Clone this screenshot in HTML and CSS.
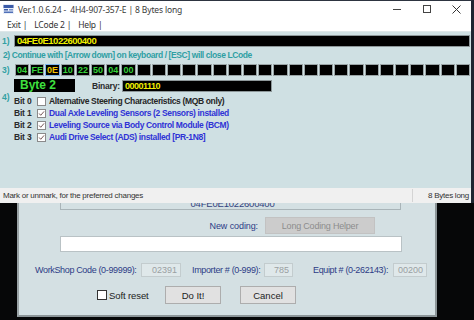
FILE: index.html
```html
<!DOCTYPE html>
<html>
<head>
<meta charset="utf-8">
<link rel="stylesheet" href="styles.css">
</head>
<body>
<div class="desktop">
  <div class="win back">
    <div class="codebox"><span>04FE0E1022600400</span></div>
    <div class="newrow">
      <span class="lbl">New coding:</span>
      <button class="btn disabled">Long Coding Helper</button>
    </div>
    <div class="newinput"></div>
    <div class="wsrow">
      <span class="lbl w1">WorkShop Code (0-99999):</span>
      <span class="field f1">02391</span>
      <span class="lbl w2">Importer # (0-999):</span>
      <span class="field f2">785</span>
      <span class="lbl w3">Equipt # (0-262143):</span>
      <span class="field f3">00200</span>
    </div>
    <div class="actrow">
      <label class="soft"><span class="cb"></span>Soft reset</label>
      <button class="btn act">Do It!</button>
      <button class="btn act">Cancel</button>
    </div>
  </div>

  <div class="win front">
    <div class="titlebar">
      <svg class="appicon" width="11" height="10" viewBox="0 0 11 10">
        <rect x="0" y="0" width="11" height="10" fill="#e8eef8"/>
        <rect x="0.5" y="1" width="10" height="3" fill="#3a5aa8"/>
        <rect x="1" y="5" width="4" height="1.5" fill="#3a5aa8"/>
        <rect x="6" y="5" width="4" height="1.5" fill="#7890c8"/>
        <rect x="1" y="7.5" width="9" height="1.5" fill="#5070b8"/>
      </svg>
      <span class="title">Ver.1.0.6.24 - &nbsp;4H4-907-357-E | 8 Bytes long</span>
      <div class="controls">
        <span class="ctl min"></span>
        <span class="ctl max"></span>
        <svg class="ctl close" width="9" height="9" viewBox="0 0 9 9"><path d="M0.5 0.5 L8.5 8.5 M8.5 0.5 L0.5 8.5" stroke="#333" stroke-width="1"/></svg>
      </div>
    </div>
    <div class="menubar">
      <span>Exit |</span><span>LCode 2 |</span><span>Help |</span>
    </div>
    <div class="content">
      <div class="row r1">
        <span class="num">1)</span>
        <div class="blackfield long">04FE0E1022600400</div>
      </div>
      <div class="row r2">2) Continue with [Arrow down] on keyboard / [ESC] will close LCode</div>
      <div class="row r3">
        <span class="num">3)</span>
        <div class="cells">
          <span class="cell">04</span><span class="cell">FE</span><span class="cell sel">0E</span><span class="cell">10</span><span class="cell">22</span><span class="cell">50</span><span class="cell">04</span><span class="cell">00</span>
          <span class="cell"></span><span class="cell"></span><span class="cell"></span><span class="cell"></span><span class="cell"></span><span class="cell"></span><span class="cell"></span><span class="cell"></span><span class="cell"></span><span class="cell"></span><span class="cell"></span><span class="cell"></span><span class="cell"></span><span class="cell"></span><span class="cell"></span><span class="cell"></span><span class="cell"></span><span class="cell"></span><span class="cell"></span><span class="cell"></span><span class="cell"></span><span class="cell"></span>
        </div>
      </div>
      <div class="row r4">
        <div class="bytebox">Byte 2</div>
        <span class="binlbl">Binary:</span>
        <div class="blackfield bin">00001110</div>
      </div>
      <div class="bits">
        <span class="num n4">4)</span>
        <div class="bitrow"><span class="bitn">Bit 0</span><span class="cb"></span><span class="bl dark">Alternative Steering Characteristics (MQB only)</span></div>
        <div class="bitrow"><span class="bitn">Bit 1</span><span class="cb on"><svg width="9" height="9" viewBox="0 0 9 9"><path d="M1.5 4.5 L3.5 6.8 L7.8 1.8" fill="none" stroke="#6a4a4a" stroke-width="1.2"/></svg></span><span class="bl">Dual Axle Leveling Sensors (2 Sensors) installed</span></div>
        <div class="bitrow"><span class="bitn">Bit 2</span><span class="cb on"><svg width="9" height="9" viewBox="0 0 9 9"><path d="M1.5 4.5 L3.5 6.8 L7.8 1.8" fill="none" stroke="#6a4a4a" stroke-width="1.2"/></svg></span><span class="bl">Leveling Source via Body Control Module (BCM)</span></div>
        <div class="bitrow"><span class="bitn">Bit 3</span><span class="cb on"><svg width="9" height="9" viewBox="0 0 9 9"><path d="M1.5 4.5 L3.5 6.8 L7.8 1.8" fill="none" stroke="#6a4a4a" stroke-width="1.2"/></svg></span><span class="bl">Audi Drive Select (ADS) installed [PR-1N8]</span></div>
      </div>
    </div>
    <div class="statusbar">
      <span class="st-main">Mark or unmark, for the preferred changes</span>
      <span class="st-right">8 Bytes long</span>
    </div>
  </div>
</div>
</body>
</html>
```
FILE: styles.css
```css
* { box-sizing: border-box; }
html, body { margin: 0; padding: 0; }
body {
  width: 474px;
  height: 320px;
  overflow: hidden;
  background: #060708;
  font-family: "Liberation Sans", Arial, sans-serif;
}
.desktop { position: relative; width: 474px; height: 320px; }
.win { position: absolute; }

/* ---------- back window ---------- */
.back {
  left: 17px;
  top: 170px;
  width: 420px;
  height: 147px;
  background: #d4e0e3;
  border-left: 2px solid #9aa3a6;
  border-right: 2px solid #8c9598;
  border-bottom: 2px solid #8c9598;
  display: flex;
  flex-direction: column;
}
.codebox {
  margin: 0 34px 0 41px;
  height: 40px;
  border: 1px solid #a9b4b8;
  border-top: none;
  display: flex;
  align-items: flex-end;
  justify-content: center;
  padding-bottom: 0;
  font-size: 9.5px;
  letter-spacing: -0.2px;
  color: #33427e;
}
.codebox span { transform: translateX(2px); }
.newrow {
  margin-top: 7px;
  height: 17px;
  display: flex;
  align-items: center;
  justify-content: flex-end;
  padding-right: 60px;
}
.lbl { font-size: 9px; letter-spacing: -0.35px; color: #2d3c86; white-space: nowrap; }
.newrow .lbl { margin-right: 7px; letter-spacing: -0.1px; }
.btn {
  font-family: "Liberation Sans", Arial, sans-serif;
  font-size: 9.5px;
  padding: 0;
  border: 1px solid #adadad;
  background: #e1e1e1;
  color: #222;
}
.btn.disabled {
  width: 110px;
  height: 17px;
  background: #cccccc;
  border-color: #c2c2c2;
  color: #8d8d8d;
  font-size: 9px;
  letter-spacing: -0.2px;
}
.newinput {
  margin: 2px 33px 0 41px;
  height: 16px;
  background: #fff;
  border: 1px solid #b9c2c5;
}
.wsrow {
  margin-top: 11px;
  height: 14px;
  display: flex;
  align-items: center;
  padding-left: 16px;
}
.w1 { width: 106px; }
.w2 { width: 72px; margin-left: 11px; }
.w3 { width: 80px; margin-left: 20px; }
.field {
  height: 14px;
  background: #dfe8ea;
  border: 1px solid #c3ccce;
  color: #9aa0a2;
  font-size: 9px;
  text-align: right;
  padding-right: 3px;
  line-height: 12px;
}
.f1 { width: 40px; }
.f2 { width: 29px; }
.f3 { width: 34px; }
.actrow {
  margin-top: 9px;
  height: 18px;
  display: flex;
  align-items: center;
  padding-left: 78px;
}
.soft { display: flex; align-items: center; font-size: 9.5px; color: #222; width: 68px; letter-spacing: -0.1px; }
.soft .cb { width: 10px; height: 10px; background: #fff; border: 1px solid #333; margin-right: 2px; }
.btn.act { width: 56px; height: 18px; }
.btn.act + .btn.act { margin-left: 19px; }

/* ---------- front window ---------- */
.front {
  left: 0;
  top: 0;
  width: 474px;
  height: 203px;
  border-top: 1px solid #2d3440;
  border-right: 3px solid #1e2531;
  background: #cfe0e3;
  display: flex;
  flex-direction: column;
}
.titlebar {
  height: 16px;
  background: #fff;
  display: flex;
  align-items: center;
  padding-left: 3px;
  font-family: "Noto Sans", "DejaVu Sans", sans-serif;
  font-size: 8.5px;
  color: #3a3a3a;
}
.appicon { margin-right: 4px; }
.title { white-space: pre; letter-spacing: -0.15px; }
.controls { margin-left: auto; display: flex; align-items: center; height: 16px; }
.ctl { display: block; }
.min { width: 8px; height: 1px; background: #444; margin-right: 22px; }
.max { width: 8px; height: 8px; border: 1px solid #444; margin-right: 21px; }
.close { margin-right: 10px; }
.menubar {
  height: 15px;
  background: #fff;
  display: flex;
  align-items: center;
  padding-left: 7px;
  gap: 7px;
  font-family: "Noto Sans", "DejaVu Sans", sans-serif;
  font-size: 8.5px;
  letter-spacing: -0.2px;
  color: #333;
  border-bottom: 1px solid #dde6e8;
}
.content {
  height: 156px;
  display: flex;
  flex-direction: column;
  font-weight: bold;
  font-size: 8.5px;
}
.row { display: flex; align-items: center; }
.num { width: 12px; padding-left: 2px; color: #33a0a4; font-size: 8.5px; font-weight: bold; }
.r1 { margin-top: 3px; height: 12px; }
.blackfield {
  background: #000;
  border: 1px solid #8d9799;
  color: #f0f000;
  font-size: 9.5px;
  line-height: 10px;
  padding-left: 2px;
  letter-spacing: -0.5px;
}
.long { width: 456px; height: 12px; margin-left: 2px; }
.r2 {
  margin-top: 2px;
  height: 12px;
  padding-left: 3px;
  color: #2f9fa3;
  font-size: 8.5px;
  letter-spacing: -0.4px;
  white-space: nowrap;
}
.r3 { margin-top: 3px; height: 12px; }
.cells {
  margin-left: 3px;
  width: 455px;
  display: grid;
  grid-template-columns: repeat(30, 1fr);
  column-gap: 1px;
}
.cell {
  height: 12px;
  background: #000;
  border: 1px solid #9aa4a6;
  color: #36d23a;
  font-size: 9px;
  line-height: 10px;
  text-align: center;
}
.cell.sel { border-color: #7fb4e8; color: #f2c200; }
.r4 { margin-top: 3px; height: 13px; padding-left: 14px; }
.bytebox {
  width: 61px;
  height: 13px;
  background: #000;
  color: #3ee03e;
  font-size: 12px;
  line-height: 13px;
  padding-left: 6px;
}
.binlbl { margin-left: 17px; color: #2a2a2a; font-size: 8.5px; width: 30px; letter-spacing: -0.2px; }
.bin { width: 150px; height: 12px; font-size: 9px; }
.bits { position: relative; margin-top: 3px; padding-left: 14px; }
.n4 { position: absolute; left: 0; top: -3px; }
.bitrow { height: 12px; display: flex; align-items: center; }
.bitn { width: 23px; color: #2a2a2a; font-size: 8.5px; letter-spacing: -0.2px; }
.bitrow .cb {
  width: 9px; height: 9px; background: #fff; border: 1px solid #8a8a8a;
  margin-right: 3px; display: flex; align-items: center; justify-content: center;
}
.bitrow .cb svg { display: block; }
.bl { color: #2f33d6; font-size: 8.5px; letter-spacing: -0.35px; white-space: nowrap; }
.bl.dark { color: #262626; }
.statusbar {
  height: 15px;
  background: #f0f0f0;
  display: flex;
  align-items: center;
  font-size: 8px;
  letter-spacing: -0.25px;
  color: #333;
  font-family: "Liberation Sans", Arial, sans-serif;
  font-weight: normal;
}
.st-main { flex: 1; padding-left: 3px; }
.st-right { width: 59px; border-left: 1px solid #d4d4d4; height: 13px; line-height: 13px; text-align: right; padding-right: 2px; }
```
